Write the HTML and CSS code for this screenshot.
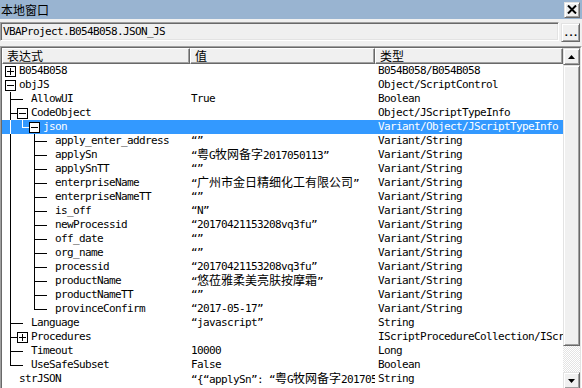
FILE: index.html
```html
<!DOCTYPE html>
<html lang="zh">
<head>
<meta charset="utf-8">
<title>本地窗口</title>
<link rel="stylesheet" href="styles.css">
</head>
<body>
<div class="win">
  <div class="title">
    <span class="title-text">本地窗口</span>
    <span class="close"><svg width="10" height="9" viewBox="0 0 10 9"><path d="M1 0.5L9 8.5M9 0.5L1 8.5" stroke="#000" stroke-width="2"/></svg></span>
  </div>
  <div class="ctxrow">
    <div class="ctx">VBAProject.B054B058.JSON_JS</div>
    <span class="more">...</span>
  </div>
  <div class="frame">
    <div class="frame-in">
      <div class="list">
        <div class="head">
          <div class="hc">表达式</div>
          <div class="hc">值</div>
          <div class="hc">类型</div>
        </div>
        <div class="rows">
          <div class="row"><div class="tc"><span class="c bx"><i class="box plus"></i></span><span class="lbl">B054B058</span></div><div class="vc"></div><div class="ty">B054B058/B054B058</div></div>
          <div class="row"><div class="tc"><span class="c bx"><i class="box"></i></span><span class="lbl">objJS</span></div><div class="vc"></div><div class="ty">Object/ScriptControl</div></div>
          <div class="row"><div class="tc"><span class="c tee"></span><span class="c leaf"></span><span class="lbl">AllowUI</span></div><div class="vc">True</div><div class="ty">Boolean</div></div>
          <div class="row"><div class="tc"><span class="c tee"></span><span class="c bx lk"><i class="box"></i></span><span class="lbl">CodeObject</span></div><div class="vc"></div><div class="ty">Object/JScriptTypeInfo</div></div>
          <div class="row sel"><div class="tc"><span class="c v"></span><span class="c elb"></span><span class="c bx lk"><i class="box"></i></span><span class="lbl">json</span></div><div class="vc"></div><div class="ty">Variant/Object/JScriptTypeInfo</div></div>
          <div class="row"><div class="tc"><span class="c v"></span><span class="c"></span><span class="c tee"></span><span class="c leaf"></span><span class="lbl">apply_enter_address</span></div><div class="vc">“”</div><div class="ty">Variant/String</div></div>
          <div class="row"><div class="tc"><span class="c v"></span><span class="c"></span><span class="c tee"></span><span class="c leaf"></span><span class="lbl">applySn</span></div><div class="vc">“<span class="cjk">粤</span>G<span class="cjk">牧网备字</span>2017050113”</div><div class="ty">Variant/String</div></div>
          <div class="row"><div class="tc"><span class="c v"></span><span class="c"></span><span class="c tee"></span><span class="c leaf"></span><span class="lbl">applySnTT</span></div><div class="vc">“”</div><div class="ty">Variant/String</div></div>
          <div class="row"><div class="tc"><span class="c v"></span><span class="c"></span><span class="c tee"></span><span class="c leaf"></span><span class="lbl">enterpriseName</span></div><div class="vc">“<span class="cjk">广州市金日精细化工有限公司</span>”</div><div class="ty">Variant/String</div></div>
          <div class="row"><div class="tc"><span class="c v"></span><span class="c"></span><span class="c tee"></span><span class="c leaf"></span><span class="lbl">enterpriseNameTT</span></div><div class="vc">“”</div><div class="ty">Variant/String</div></div>
          <div class="row"><div class="tc"><span class="c v"></span><span class="c"></span><span class="c tee"></span><span class="c leaf"></span><span class="lbl">is_off</span></div><div class="vc">“N”</div><div class="ty">Variant/String</div></div>
          <div class="row"><div class="tc"><span class="c v"></span><span class="c"></span><span class="c tee"></span><span class="c leaf"></span><span class="lbl">newProcessid</span></div><div class="vc">“20170421153208vq3fu”</div><div class="ty">Variant/String</div></div>
          <div class="row"><div class="tc"><span class="c v"></span><span class="c"></span><span class="c tee"></span><span class="c leaf"></span><span class="lbl">off_date</span></div><div class="vc">“”</div><div class="ty">Variant/String</div></div>
          <div class="row"><div class="tc"><span class="c v"></span><span class="c"></span><span class="c tee"></span><span class="c leaf"></span><span class="lbl">org_name</span></div><div class="vc">“”</div><div class="ty">Variant/String</div></div>
          <div class="row"><div class="tc"><span class="c v"></span><span class="c"></span><span class="c tee"></span><span class="c leaf"></span><span class="lbl">processid</span></div><div class="vc">“20170421153208vq3fu”</div><div class="ty">Variant/String</div></div>
          <div class="row"><div class="tc"><span class="c v"></span><span class="c"></span><span class="c tee"></span><span class="c leaf"></span><span class="lbl">productName</span></div><div class="vc">“<span class="cjk">悠莅雅柔美亮肤按摩霜</span>”</div><div class="ty">Variant/String</div></div>
          <div class="row"><div class="tc"><span class="c v"></span><span class="c"></span><span class="c tee"></span><span class="c leaf"></span><span class="lbl">productNameTT</span></div><div class="vc">“”</div><div class="ty">Variant/String</div></div>
          <div class="row"><div class="tc"><span class="c v"></span><span class="c"></span><span class="c elb"></span><span class="c leaf"></span><span class="lbl">provinceConfirm</span></div><div class="vc">“2017-05-17”</div><div class="ty">Variant/String</div></div>
          <div class="row"><div class="tc"><span class="c tee"></span><span class="c leaf"></span><span class="lbl">Language</span></div><div class="vc">“javascript”</div><div class="ty">String</div></div>
          <div class="row"><div class="tc"><span class="c tee"></span><span class="c bx lk"><i class="box plus"></i></span><span class="lbl">Procedures</span></div><div class="vc"></div><div class="ty">IScriptProcedureCollection/IScr</div></div>
          <div class="row"><div class="tc"><span class="c tee"></span><span class="c leaf"></span><span class="lbl">Timeout</span></div><div class="vc">10000</div><div class="ty">Long</div></div>
          <div class="row"><div class="tc"><span class="c elb"></span><span class="c leaf"></span><span class="lbl">UseSafeSubset</span></div><div class="vc">False</div><div class="ty">Boolean</div></div>
          <div class="row"><div class="tc"><span class="c"></span><span class="lbl">strJSON</span></div><div class="vc">“{“applySn”: “<span class="cjk">粤</span>G<span class="cjk">牧网备字</span>201705</div><div class="ty">String</div></div>
        </div>
      </div>
      <div class="vs">
        <span class="sbtn"><svg width="7" height="4" viewBox="0 0 7 4"><path d="M3.5 0L7 4H0Z" fill="#000"/></svg></span>
        <span class="thumb"></span>
        <span class="track"></span>
        <span class="sbtn"><svg width="7" height="4" viewBox="0 0 7 4"><path d="M0 0H7L3.5 4Z" fill="#000"/></svg></span>
      </div>
    </div>
  </div>
</div>
</body>
</html>
```
FILE: styles.css
```css
html, body {
  margin: 0;
  padding: 0;
  background: #f0f0f0;
}
body {
  font-family: "DejaVu Sans Mono", "Noto Sans CJK SC", monospace;
  color: #000;
}
.win {
  width: 582px;
  height: 388px;
  overflow: hidden;
  display: flex;
  flex-direction: column;
}
.title {
  height: 19px;
  flex: none;
  background: #99b4d1;
  display: flex;
  align-items: center;
  justify-content: space-between;
  padding: 0 2px 0 1px;
}
.title-text {
  font: 12px/19px "Noto Sans CJK SC", sans-serif;
}
.close, .more, .sbtn, .thumb {
  box-sizing: border-box;
  background: #f0f0f0;
  border: 1px solid;
  border-color: #e3e3e3 #696969 #696969 #e3e3e3;
  box-shadow: inset 1px 1px 0 #fff, inset -1px -1px 0 #a0a0a0;
}
.close {
  width: 16px;
  height: 16px;
  display: flex;
  align-items: center;
  justify-content: center;
}
.ctxrow {
  flex: none;
  display: flex;
  align-items: flex-start;
  gap: 2px;
  padding-top: 3px;
}
.ctx {
  box-sizing: border-box;
  width: 559px;
  height: 19px;
  border: 1px solid;
  border-color: #a0a0a0 #fff #fff #a0a0a0;
  box-shadow: inset 1px 1px 0 #696969, inset -1px -1px 0 #e3e3e3;
  padding-left: 2px;
  font-size: 11px;
  letter-spacing: -0.62px;
  line-height: 17px;
  white-space: nowrap;
  overflow: hidden;
}
.more {
  width: 19px;
  height: 19px;
  margin-top: 1px;
  font: bold 11px/19px "Liberation Mono", monospace;
  letter-spacing: -2px;
  text-align: center;
  text-indent: -1px;
}
.frame {
  flex: 1;
  min-height: 0;
  margin-top: 4px;
  border: 1px solid;
  border-color: #a0a0a0 #fff #fff #a0a0a0;
  border-bottom: 0;
  display: flex;
}
.frame-in {
  flex: 1;
  min-width: 0;
  border: 1px solid;
  border-color: #696969 #e3e3e3 #e3e3e3 #696969;
  border-bottom: 0;
  display: flex;
}
.list {
  flex: 1;
  min-width: 0;
  background: #fff;
  overflow: hidden;
}
.head, .row {
  display: grid;
  grid-template-columns: 188px 185px 1fr;
}
.head {
  height: 16px;
  background: #f0f0f0;
}
.hc {
  box-sizing: border-box;
  height: 16px;
  border: 1px solid;
  border-color: #fff #696969 #696969 #fff;
  box-shadow: inset -1px -1px 0 #a0a0a0;
  padding-left: 4px;
  font: 12px/14px "Noto Sans CJK SC", sans-serif;
  white-space: nowrap;
  overflow: hidden;
}
.row {
  height: 14px;
  line-height: 14px;
  font-size: 11px;
  letter-spacing: -0.62px;
  white-space: nowrap;
  --ln: #000;
}
.row > div {
  overflow-x: clip;
}
.row.sel {
  background: #3399ff;
  color: #fff;
  --ln: #fff;
}
.tc {
  display: flex;
  padding-left: 2px;
}
.c {
  flex: none;
  width: 12px;
  height: 14px;
}
.v {
  background: linear-gradient(var(--ln), var(--ln)) 6px 0 / 1px 14px no-repeat;
}
.tee {
  background:
    linear-gradient(var(--ln), var(--ln)) 6px 0 / 1px 14px no-repeat,
    linear-gradient(var(--ln), var(--ln)) 6px 7px / 6px 1px no-repeat;
}
.elb {
  background:
    linear-gradient(var(--ln), var(--ln)) 6px 0 / 1px 8px no-repeat,
    linear-gradient(var(--ln), var(--ln)) 6px 7px / 6px 1px no-repeat;
}
.leaf {
  background: linear-gradient(var(--ln), var(--ln)) 0 7px / 7px 1px no-repeat;
}
.bx.lk {
  background: linear-gradient(var(--ln), var(--ln)) 0 7px / 1px 1px no-repeat;
}
.box {
  display: block;
  box-sizing: border-box;
  width: 11px;
  height: 11px;
  margin: 2px 0 0 1px;
  border: 1px solid #000;
  background: linear-gradient(#000, #000) 1px 4px / 7px 1px no-repeat, #fff;
}
.box.plus {
  background:
    linear-gradient(#000, #000) 1px 4px / 7px 1px no-repeat,
    linear-gradient(#000, #000) 4px 1px / 1px 7px no-repeat,
    #fff;
}
.lbl {
  margin-left: 3px;
}
.vc {
  padding-left: 1px;
}
.ty {
  padding-left: 3px;
}
.cjk {
  font-family: "Noto Sans CJK SC", sans-serif;
  font-size: 12px;
  line-height: 12px;
  letter-spacing: 0;
}
.vs {
  flex: none;
  width: 17px;
  display: flex;
  flex-direction: column;
}
.sbtn {
  height: 17px;
  flex: none;
  display: flex;
  align-items: center;
  justify-content: center;
}
.thumb {
  height: 281px;
  flex: none;
}
.track {
  height: 26px;
  flex: none;
  background: repeating-conic-gradient(#fff 0 25%, #e3e3e3 0 50%) 0 0 / 2px 2px;
}
```
